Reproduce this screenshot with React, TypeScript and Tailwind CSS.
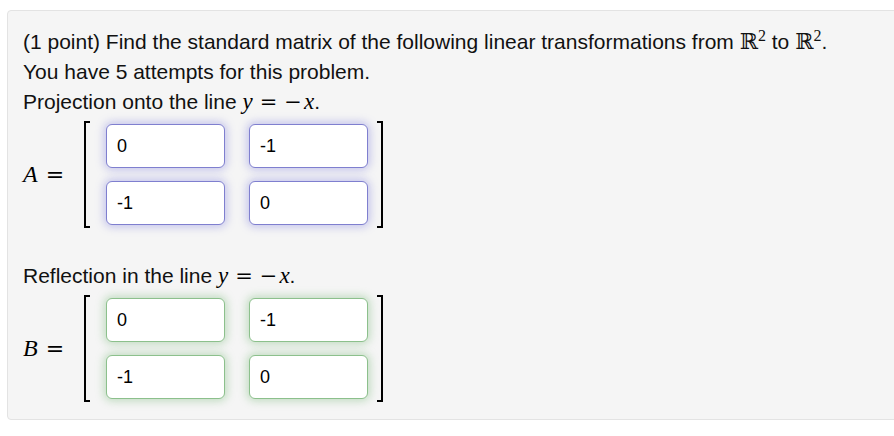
const MATH = { fontFamily: '"Liberation Serif", "DejaVu Serif", serif' };
const OP = { fontFamily: '"DejaVu Serif", serif' };

function Bracket({ side }: { side: "l" | "r" }) {
  return (
    <div
      className={`h-[107px] w-[6px] shrink-0 border-y-2 border-black ${
        side === "l" ? "border-l-2" : "border-r-2"
      }`}
    />
  );
}

function Cell({ value, tone }: { value: string; tone: "blue" | "green" }) {
  return (
    <div
      className={`flex h-[44px] w-[119px] items-center rounded-[6px] border bg-white pl-[10px] text-[18px] text-black ${
        tone === "blue"
          ? "border-[#7f7fcf] shadow-[0_0_8px_2px_rgba(120,120,220,0.4)]"
          : "border-[#8cc08c] shadow-[0_0_8px_2px_rgba(110,180,110,0.4)]"
      }`}
    >
      {value}
    </div>
  );
}

function Matrix({ name, tone }: { name: string; tone: "blue" | "green" }) {
  const values = ["0", "-1", "-1", "0"];
  return (
    <div className="flex items-center">
      <div className="w-[61px] text-[24px] text-black" style={MATH}>
        <i>{name}</i>
        <span className="ml-[8px] text-[22px]" style={OP}>
          =
        </span>
      </div>
      <Bracket side="l" />
      <div className="ml-[16px] mr-[9px] grid grid-cols-[119px_119px] gap-x-[24px] gap-y-[13px]">
        {values.map((v, i) => (
          <Cell key={i} value={v} tone={tone} />
        ))}
      </div>
      <Bracket side="r" />
    </div>
  );
}

function Eq() {
  return (
    <span className="text-[23px] text-black" style={MATH}>
      <i>y</i>
      <span className="mx-[7px] text-[21px]" style={OP}>
        =
      </span>
      <span className="mr-[2px] text-[21px]" style={OP}>
        −
      </span>
      <i>x</i>
    </span>
  );
}

function R2() {
  return (
    <span style={MATH} className="text-[22px]">
      ℝ<sup className="text-[16px]">2</sup>
    </span>
  );
}

export default function App() {
  return (
    <div
      className="h-[436px] w-[894px] overflow-hidden bg-white"
      style={{ fontFamily: '"Liberation Sans", Arial, sans-serif' }}
    >
      <div className="ml-[7px] mt-[10px] w-[900px] rounded-[4px] border border-[#e3e3e3] bg-[#f5f5f5] pb-[17px] pl-[15px] pt-[16px] text-[21px] leading-[30px] text-[#111]">
        <p>
          (1 point) Find the standard matrix of the following linear transformations from <R2 /> to <R2 />.
        </p>
        <p>You have 5 attempts for this problem.</p>
        <p>
          Projection onto the line <Eq />.
        </p>
        <div className="mt-[4px]">
          <Matrix name="A" tone="blue" />
        </div>
        <p className="mt-[33px]">
          Reflection in the line <Eq />.
        </p>
        <div className="mt-[4px]">
          <Matrix name="B" tone="green" />
        </div>
      </div>
    </div>
  );
}
